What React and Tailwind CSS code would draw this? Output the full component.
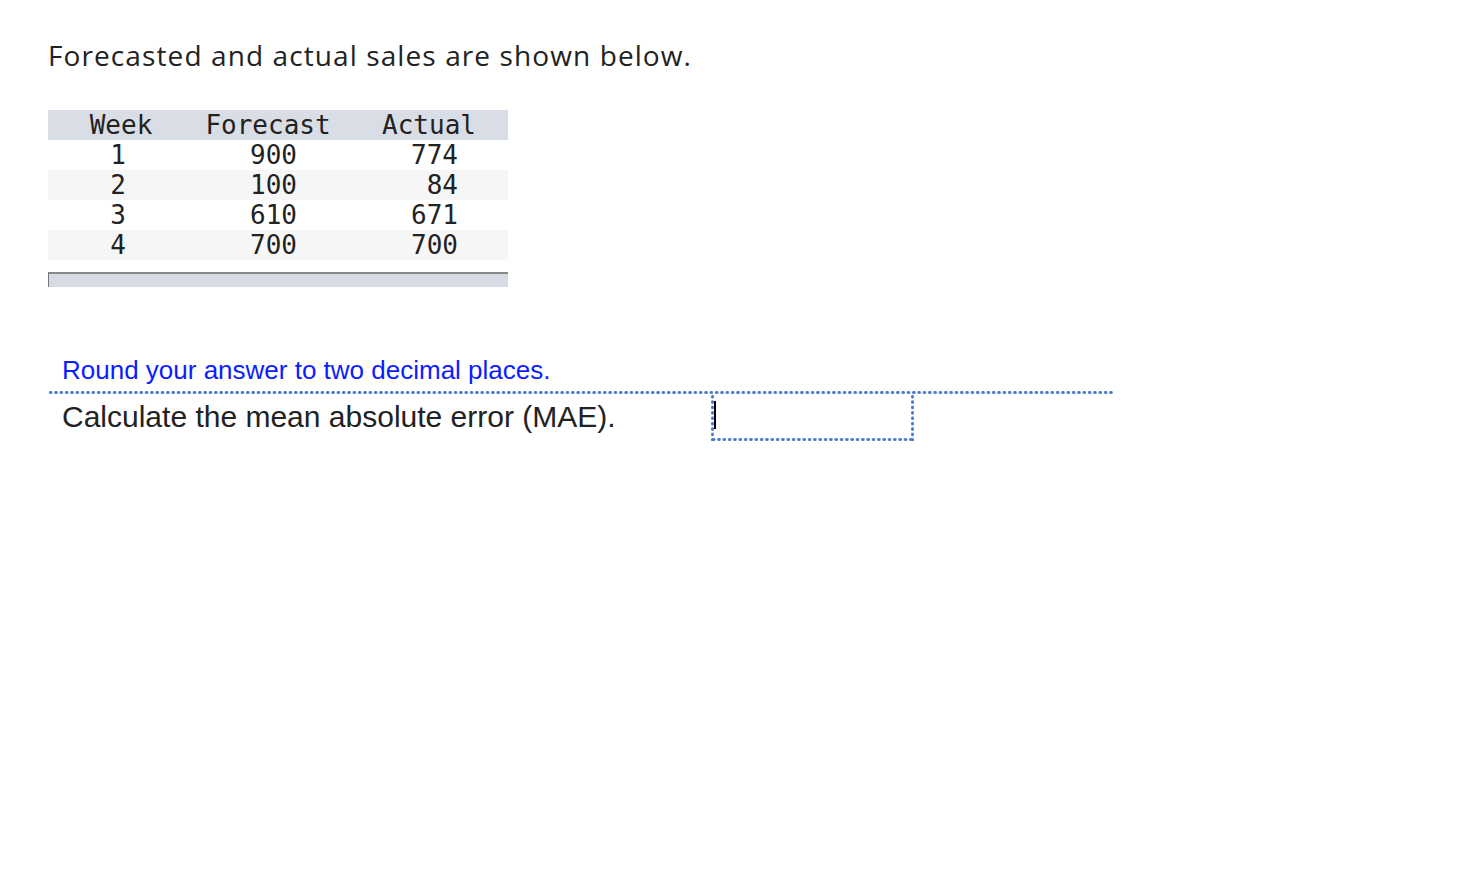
import React from "react";

const rows = [
  ["1", "900", "774"],
  ["2", "100", "84"],
  ["3", "610", "671"],
  ["4", "700", "700"],
];

const hDots =
  "bg-[radial-gradient(circle,#4a7cc9_1.4px,transparent_1.9px)] bg-[length:5.33px_3px] bg-repeat-x";
const vDots =
  "bg-[radial-gradient(circle,#4a7cc9_1.4px,transparent_1.9px)] bg-[length:3px_5.4px] bg-repeat-y";

export default function App() {
  return (
    <div className="min-h-[876px] w-[1472px] bg-white pl-[48px] pt-[37px]">
      <p className="text-[28px] leading-[36px] tracking-[1.1px] text-[#222222]" style={{ fontFamily: "'Open Sans', Lato, sans-serif" }}>
        Forecasted and actual sales are shown below.
      </p>

      <div className="mt-[37px] w-[460px]" style={{ fontFamily: "'DejaVu Sans Mono', monospace" }}>
        <div className="grid h-[30px] grid-cols-[146px_148px_166px] items-center bg-[#d9dde6] text-[26px] leading-[30px] text-[#222222]">
          <div className="text-center">Week</div>
          <div className="text-center">Forecast</div>
          <div className="pl-[8px] text-center">Actual</div>
        </div>
        {rows.map((r, i) => (
          <div
            key={i}
            className={`grid h-[30px] grid-cols-[146px_148px_166px] items-center text-[26px] leading-[30px] text-[#222222] ${i % 2 === 1 ? "bg-[#f6f6f6]" : "bg-white"}`}
          >
            <div className="pr-[68px] text-right">{r[0]}</div>
            <div className="pr-[45px] text-right">{r[1]}</div>
            <div className="pr-[50px] text-right">{r[2]}</div>
          </div>
        ))}
        <div className="mt-[12px] h-[15px] border-l border-t-2 border-l-[#777777] border-t-[#888888] bg-[#d6dbe4]" />
      </div>

      <div className="mt-[66px] w-[1066px]" style={{ fontFamily: "'Liberation Sans', Arial, sans-serif" }}>
        <p className="h-[38px] pl-[14px] text-[26px] leading-[34px] text-[#0b1dff]">Round your answer to two decimal places.</p>
        <div className={`h-[3px] w-full ${hDots}`} />
        <div className="flex items-start">
          <p className="w-[663px] pl-[14px] pt-[5px] text-[30px] leading-[36px] text-[#222222]">
            Calculate the mean absolute error (MAE).
          </p>
          <div className="relative h-[47px] w-[203px]">
            <div className={`absolute left-0 top-0 h-full w-[3px] ${vDots}`} />
            <div className={`absolute right-0 top-0 h-full w-[3px] ${vDots}`} />
            <div className={`absolute bottom-0 left-0 h-[3px] w-full ${hDots}`} />
            <div className="absolute left-[3px] top-[7px] h-[28px] w-[2px] bg-black" />
          </div>
        </div>
      </div>
    </div>
  );
}
